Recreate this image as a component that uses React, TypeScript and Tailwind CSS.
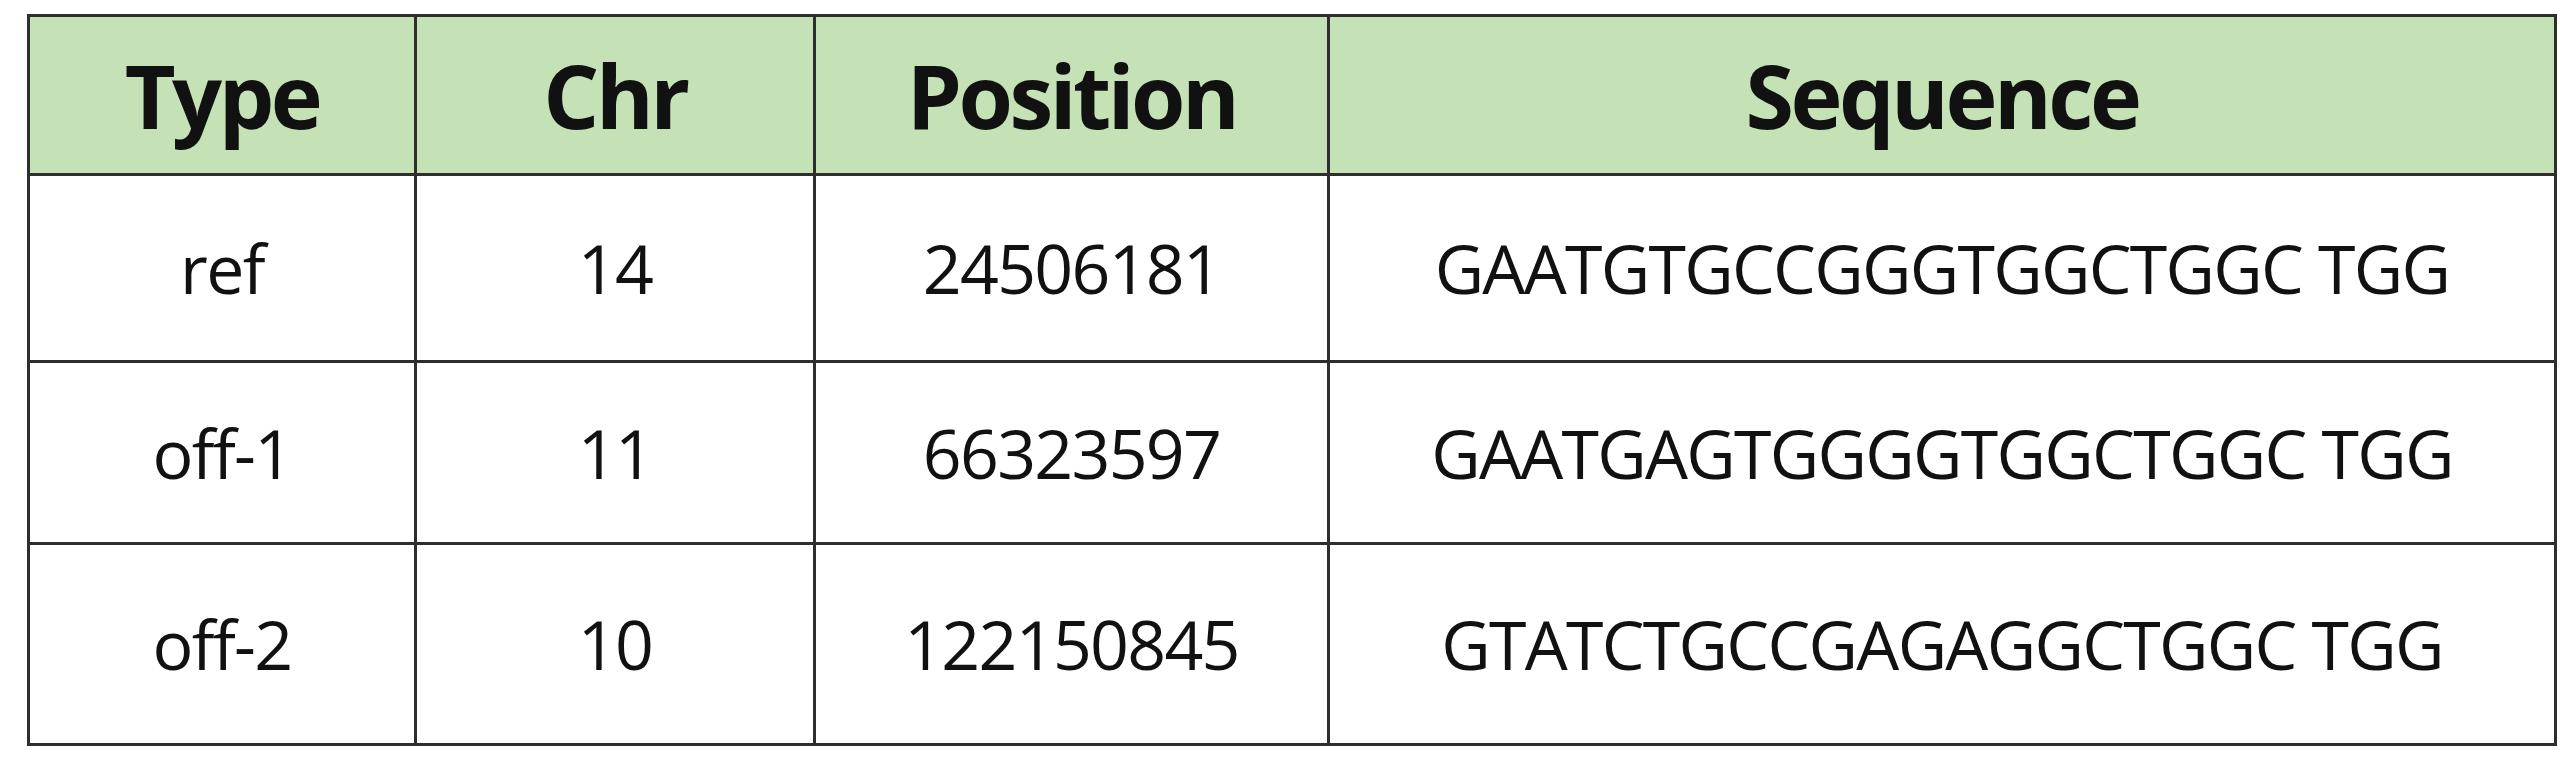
const rows = [
  { type: 'ref', chr: '14', pos: '24506181', seq: 'GAATGTGCCGGGTGGCTGGC TGG', h: 'h-[187px]' },
  { type: 'off-1', chr: '11', pos: '66323597', seq: 'GAATGAGTGGGGTGGCTGGC TGG', h: 'h-[182px]' },
  { type: 'off-2', chr: '10', pos: '122150845', seq: 'GTATCTGCCGAGAGGCTGGC TGG', h: 'h-[201px]' },
]

const headers = ['Type', 'Chr', 'Position', 'Sequence']

export default function App() {
  return (
    <div className="w-[2560px] h-[772px] bg-white pt-[14px] pl-[27px] font-['Open_Sans',sans-serif] text-[#111]">
      <table className="table-fixed border-collapse w-[2527px]">
        <colgroup>
          <col className="w-[387px]" />
          <col className="w-[399px]" />
          <col className="w-[514px]" />
          <col className="w-[1227px]" />
        </colgroup>
        <thead>
          <tr className="h-[159px] bg-[#c5e2b6]">
            {headers.map((h) => (
              <th
                key={h}
                className="border-[3px] border-[#2e2e2e] text-center align-middle text-[88px] font-bold tracking-[-3.5px] leading-none p-0"
              >
                {h}
              </th>
            ))}
          </tr>
        </thead>
        <tbody>
          {rows.map((r) => (
            <tr key={r.type} className={r.h}>
              {[r.type, r.chr, r.pos, r.seq].map((v, i) => (
                <td
                  key={i}
                  className="border-[3px] border-[#2e2e2e] text-center align-middle text-[68px] font-medium tracking-[-1.7px] leading-none p-0 whitespace-nowrap"
                >
                  {v}
                </td>
              ))}
            </tr>
          ))}
        </tbody>
      </table>
    </div>
  )
}
